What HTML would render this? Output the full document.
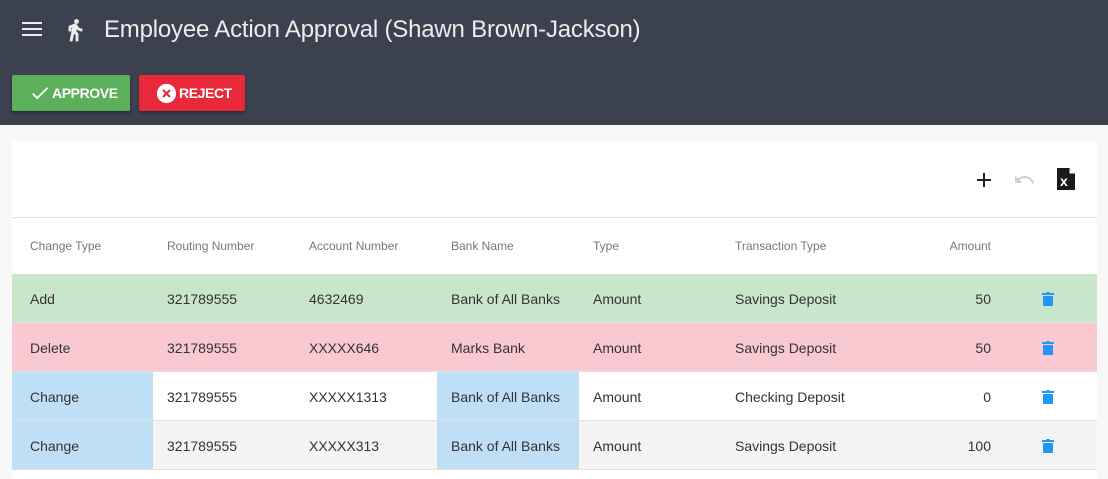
<!DOCTYPE html>
<html><head><style>
*{margin:0;padding:0;box-sizing:border-box}
body{width:1108px;height:479px;overflow:hidden;background:#f8f8f8;font-family:"Liberation Sans",sans-serif;position:relative}
.hdr{position:absolute;left:0;top:0;width:1108px;height:125px;background:#3c4150}
.title{position:absolute;left:104px;top:16px;font-size:24px;color:#ececec;white-space:nowrap;letter-spacing:-0.2px}
.btn{position:absolute;top:75px;height:36px;color:#fff;font-weight:bold;font-size:14px;border-radius:2px;box-shadow:0 2px 3px rgba(0,0,0,.35)}
.card{position:absolute;left:12px;top:141px;width:1085px;height:338px;background:#fff}
.abs{position:absolute}
.row{position:absolute;left:12px;width:1085px;height:49px;border-bottom:1px solid #e0e0e0;font-size:14px;color:#333}
.row span,.hrow span{position:absolute;top:1px;line-height:48px;white-space:nowrap}
.hrow{position:absolute;left:12px;top:217px;width:1085px;height:57px;border-top:1px solid #e0e0e0;font-size:12px;color:#777}
.hrow span{line-height:54px}
.blue{position:absolute;top:0;height:48px;background:#bfdff7}
</style></head><body>
<div class="hdr">
 <div class="abs" style="left:22px;top:22px;width:20px;height:2px;background:#eee;box-shadow:0 6px 0 #eee,0 12px 0 #eee"></div>
 <svg class="abs" style="left:63px;top:17px" width="24" height="26" viewBox="0 0 24 24"><path fill="#eee" d="M13.5 5.5c1.1 0 2-.9 2-2s-.9-2-2-2-2 .9-2 2 .9 2 2 2zM9.8 8.9L7 23h2.1l1.8-8 2.1 2v6h2v-7.5l-2.1-2 .6-3C14.8 12 16.8 13 19 13v-2c-1.9 0-3.5-1-4.3-2.4l-1-1.6c-.4-.6-1-1-1.7-1-.3 0-.5.1-.8.1L6 8.3V13h2V9.6l1.8-.7" stroke="#eee" stroke-width="0.8"/></svg>
 <div class="title">Employee Action Approval (Shawn Brown-Jackson)</div>
 <div class="btn" style="left:12px;width:118px;background:#5cb05c">
  <svg class="abs" style="left:17px;top:7px" width="22" height="22" viewBox="0 0 24 24"><path fill="#fff" d="M9 16.2L4.8 12l-1.4 1.4L9 19 21 7l-1.4-1.4z"/></svg>
  <span class="abs" style="left:40px;top:10px;letter-spacing:-0.4px">APPROVE</span></div>
 <div class="btn" style="left:139px;width:106px;background:#e8293a">
  <svg class="abs" style="left:17px;top:8px" width="21" height="21" viewBox="0 0 24 24"><circle cx="12" cy="12" r="11" fill="#fff"/><path d="M8 8l8 8M16 8l-8 8" stroke="#e8293a" stroke-width="2.4"/></svg>
  <span class="abs" style="left:40px;top:10px;letter-spacing:-0.4px">REJECT</span></div>
</div>
<div class="card"></div>
<svg class="abs" style="left:974px;top:170px" width="20" height="20" viewBox="0 0 20 20"><path d="M10 3v14M3 10h14" stroke="#222" stroke-width="2"/></svg>
<svg class="abs" style="left:1013px;top:170px" width="24" height="20" viewBox="0 0 24 20"><path d="M12 6c-2.6 0-5 1-6.8 2.6L2 5.5V13h7.5l-3-3c1.4-1.2 3.2-1.9 5.2-1.9 3.5 0 6.5 2.3 7.6 5.5l2-.6C19.8 8.9 16.2 6 12 6z" fill="#d0d0d0"/></svg>
<svg class="abs" style="left:1057px;top:168px" width="18" height="22" viewBox="0 0 18 22"><path d="M0 0h12l6 6v16H0z" fill="#1a1a1a"/><path d="M12 0v6h6" fill="#fff" stroke="#1a1a1a"/><text x="3" y="18" font-family="Liberation Sans" font-weight="bold" font-size="14" fill="#fff">x</text></svg>
<div class="hrow"><span style="left:18px">Change Type</span><span style="left:155px">Routing Number</span><span style="left:297px">Account Number</span><span style="left:439px">Bank Name</span><span style="left:581px">Type</span><span style="left:723px">Transaction Type</span><span style="right:106px">Amount</span></div>

<div class="row" style="top:274px;background:#c8e6c9"><span style="left:18px">Add</span><span style="left:155px">321789555</span><span style="left:297px">4632469</span><span style="left:439px">Bank of All Banks</span><span style="left:581px">Amount</span><span style="left:723px">Savings Deposit</span><span style="right:106px">50</span></div>
<div class="row" style="top:323px;background:#f9c9d1"><span style="left:18px">Delete</span><span style="left:155px">321789555</span><span style="left:297px">XXXXX646</span><span style="left:439px">Marks Bank</span><span style="left:581px">Amount</span><span style="left:723px">Savings Deposit</span><span style="right:106px">50</span></div>
<div class="row" style="top:372px;background:#fff"><div class="blue" style="left:0;width:141px"></div><div class="blue" style="left:425px;width:142px"></div><span style="left:18px">Change</span><span style="left:155px">321789555</span><span style="left:297px">XXXXX1313</span><span style="left:439px">Bank of All Banks</span><span style="left:581px">Amount</span><span style="left:723px">Checking Deposit</span><span style="right:106px">0</span></div>
<div class="row" style="top:421px;background:#f4f4f4"><div class="blue" style="left:0;width:141px"></div><div class="blue" style="left:425px;width:142px"></div><span style="left:18px">Change</span><span style="left:155px">321789555</span><span style="left:297px">XXXXX313</span><span style="left:439px">Bank of All Banks</span><span style="left:581px">Amount</span><span style="left:723px">Savings Deposit</span><span style="right:106px">100</span></div>

<svg class="abs" style="left:1042px;top:292px" width="12" height="14" viewBox="0 0 12 14"><path d="M0 1h4l1-1h2l1 1h4v2H0zM1 4h10v10H1z" fill="#2196f3"/></svg>
<svg class="abs" style="left:1042px;top:341px" width="12" height="14" viewBox="0 0 12 14"><path d="M0 1h4l1-1h2l1 1h4v2H0zM1 4h10v10H1z" fill="#2196f3"/></svg>
<svg class="abs" style="left:1042px;top:390px" width="12" height="14" viewBox="0 0 12 14"><path d="M0 1h4l1-1h2l1 1h4v2H0zM1 4h10v10H1z" fill="#2196f3"/></svg>
<svg class="abs" style="left:1042px;top:439px" width="12" height="14" viewBox="0 0 12 14"><path d="M0 1h4l1-1h2l1 1h4v2H0zM1 4h10v10H1z" fill="#2196f3"/></svg>
</body></html>
